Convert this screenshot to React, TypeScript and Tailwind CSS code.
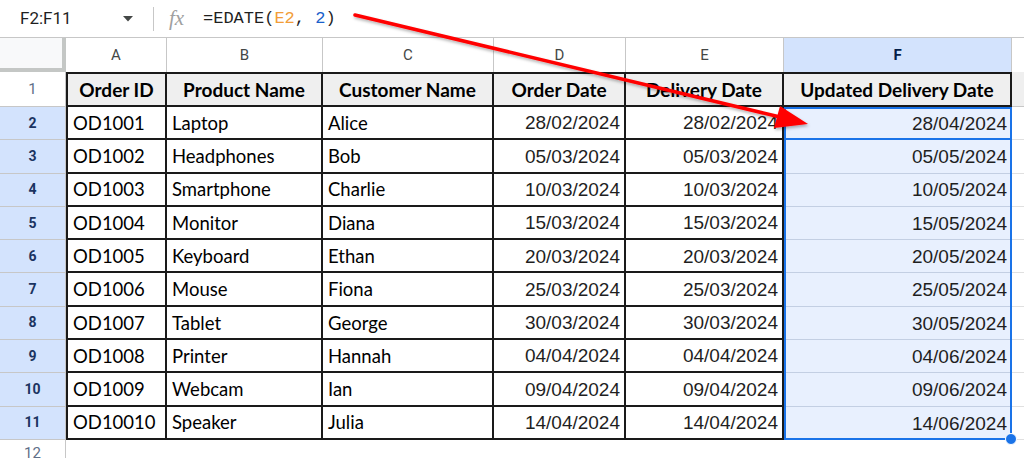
import React from 'react';

const rows = [
    ['OD1001', 'Laptop', 'Alice', '28/02/2024', '28/02/2024', '28/04/2024'],
    ['OD1002', 'Headphones', 'Bob', '05/03/2024', '05/03/2024', '05/05/2024'],
    ['OD1003', 'Smartphone', 'Charlie', '10/03/2024', '10/03/2024', '10/05/2024'],
    ['OD1004', 'Monitor', 'Diana', '15/03/2024', '15/03/2024', '15/05/2024'],
    ['OD1005', 'Keyboard', 'Ethan', '20/03/2024', '20/03/2024', '20/05/2024'],
    ['OD1006', 'Mouse', 'Fiona', '25/03/2024', '25/03/2024', '25/05/2024'],
    ['OD1007', 'Tablet', 'George', '30/03/2024', '30/03/2024', '30/05/2024'],
    ['OD1008', 'Printer', 'Hannah', '04/04/2024', '04/04/2024', '04/06/2024'],
    ['OD1009', 'Webcam', 'Ian', '09/04/2024', '09/04/2024', '09/06/2024'],
    ['OD10010', 'Speaker', 'Julia', '14/04/2024', '14/04/2024', '14/06/2024'],
];

const headers = ['Order ID', 'Product Name', 'Customer Name', 'Order Date', 'Delivery Date', 'Updated Delivery Date'];
const letters = ['A', 'B', 'C', 'D', 'E'];

const textFont = "font-['Lato','Open_Sans',sans-serif]";
const numFont = "font-['Liberation_Sans',Arial,sans-serif]";
const gridCols = 'grid grid-cols-[66px_101px_156px_171px_132px_158px_228px_1fr] grid-rows-[34px_35px_repeat(10,33.3px)_1fr]';

export default function App() {
    return (
        <div className="relative w-[1024px] h-[458px] overflow-hidden bg-white text-black font-['Roboto',sans-serif]">
            {/* formula bar */}
            <div className="flex h-[38px] items-center border-b border-[#c7c7c7]">
                <div className="flex w-[153px] items-center justify-between pl-5 pr-5 text-[17px] text-[#1f1f1f]">
                    <span>F2:F11</span>
                    <svg width="10" height="6" viewBox="0 0 10 6">
                        <path d="M0 0h10L5 5.5z" fill="#444746" />
                    </svg>
                </div>
                <div className="h-[24px] w-px bg-[#c7c7c7]" />
                <span className="ml-[15px] w-[25px] font-['Liberation_Serif',serif] text-[21px] italic leading-none text-[#a0a0a0]">fx</span>
                <span className="ml-[9px] font-['Liberation_Mono',monospace] text-[17px] text-[#1f1f1f]">
                    =EDATE(<span className="text-[#f29d38]">E2</span>, <span className="text-[#1a5fcb]">2</span>)
                </span>
            </div>

            <div className="relative h-[420px]">
                {/* sheet grid */}
                <div className={`${gridCols} h-full`}>
                    {/* column letters */}
                    <div className="bg-[#f8f9fa] border-r-4 border-b-4 border-[#c4c7c5]" />
                    {letters.map((l) => (
                        <div key={l} className="flex items-center justify-center border-r border-[#c7c7c7] text-[15px] text-[#444746]">
                            {l}
                        </div>
                    ))}
                    <div className="flex items-center justify-center border-r border-[#c7c7c7] bg-[#d3e3fd] text-[15px] font-bold text-[#041e49]">F</div>
                    <div />

                    {/* header row */}
                    <div className="flex items-center justify-center border-r border-b border-[#c7c7c7] text-[15px] text-[#5f6f88]">1</div>
                    {headers.map((h, i) => (
                        <div
                            key={h}
                            className={`flex items-center justify-center whitespace-nowrap border-t-2 border-r-2 border-b-2 border-[#1a1a1a] bg-[#efefef] pt-[1px] text-[19px] font-bold ${textFont} ${i === 0 ? 'border-l-2' : ''}`}
                        >
                            {h}
                        </div>
                    ))}
                    <div className="border-b border-[#c7c7c7] bg-[#efefef]" />

                    {/* data rows */}
                    {rows.map((r, ri) => (
                        <React.Fragment key={r[0]}>
                            <div className="flex items-center justify-center border-r border-b border-[#c7c7c7] bg-[#d3e3fd] text-[14px] font-bold text-[#1b3461]">
                                {ri + 2}
                            </div>
                            {r.slice(0, 3).map((c, ci) => (
                                <div
                                    key={ci}
                                    className={`flex items-center whitespace-nowrap border-r-2 border-b-2 border-[#1a1a1a] pl-[5px] pt-[2px] text-[18.5px] ${textFont} ${ci === 0 ? 'border-l-2' : ''}`}
                                >
                                    {c}
                                </div>
                            ))}
                            <div className={`flex items-center justify-end border-r-2 border-b-2 border-[#1a1a1a] pr-[4px] pt-[2px] text-[19px] text-[#1f1f1f] ${numFont}`}>
                                {r[3]}
                            </div>
                            <div className={`flex items-center justify-end border-r-2 border-b-2 border-[#1a1a1a] pr-[4px] pt-[2px] text-[19px] text-[#1f1f1f] ${numFont}`}>
                                {r[4]}
                            </div>
                            <div className={`flex items-center justify-end border-b border-[#c3cfe3] bg-[#e8f0fe] pr-[5px] pt-[2px] text-[19px] text-[#1f1f1f] ${numFont}`}>
                                {r[5]}
                            </div>
                            <div className="border-b border-[#e0e0e0]" />
                        </React.Fragment>
                    ))}

                    {/* row 12 */}
                    <div className="flex justify-center border-r border-[#c7c7c7] pt-[2px] text-[15px] text-[#5f6f88]">12</div>
                </div>

                {/* selection outline F2:F11, layered over the grid */}
                <div className={`${gridCols} absolute inset-0 pointer-events-none`}>
                    <div className="relative col-start-7 row-start-3 row-span-10 border-x-2 border-b-2 border-[#1a73e8]">
                        <div className="absolute -bottom-[7px] -right-[7px] h-[12px] w-[12px] rounded-full border border-white bg-[#1a73e8]" />
                    </div>
                    <div className="col-start-7 row-start-3 border-2 border-[#1a73e8]" />
                </div>
            </div>

            {/* red annotation arrow */}
            <svg className="absolute left-0 top-0 pointer-events-none" width="1024" height="458" viewBox="0 0 1024 458">
                <defs>
                    <filter id="sh" x="-10%" y="-10%" width="120%" height="130%">
                        <feDropShadow dx="1" dy="2" stdDeviation="1.5" floodColor="#000" floodOpacity="0.3" />
                    </filter>
                </defs>
                <g filter="url(#sh)">
                    <line x1="355" y1="15" x2="780" y2="117" stroke="#ff0000" strokeWidth="3.5" strokeLinecap="round" />
                    <polygon points="808,124 774,128 780,106" fill="#ff0000" />
                </g>
            </svg>
        </div>
    );
}
